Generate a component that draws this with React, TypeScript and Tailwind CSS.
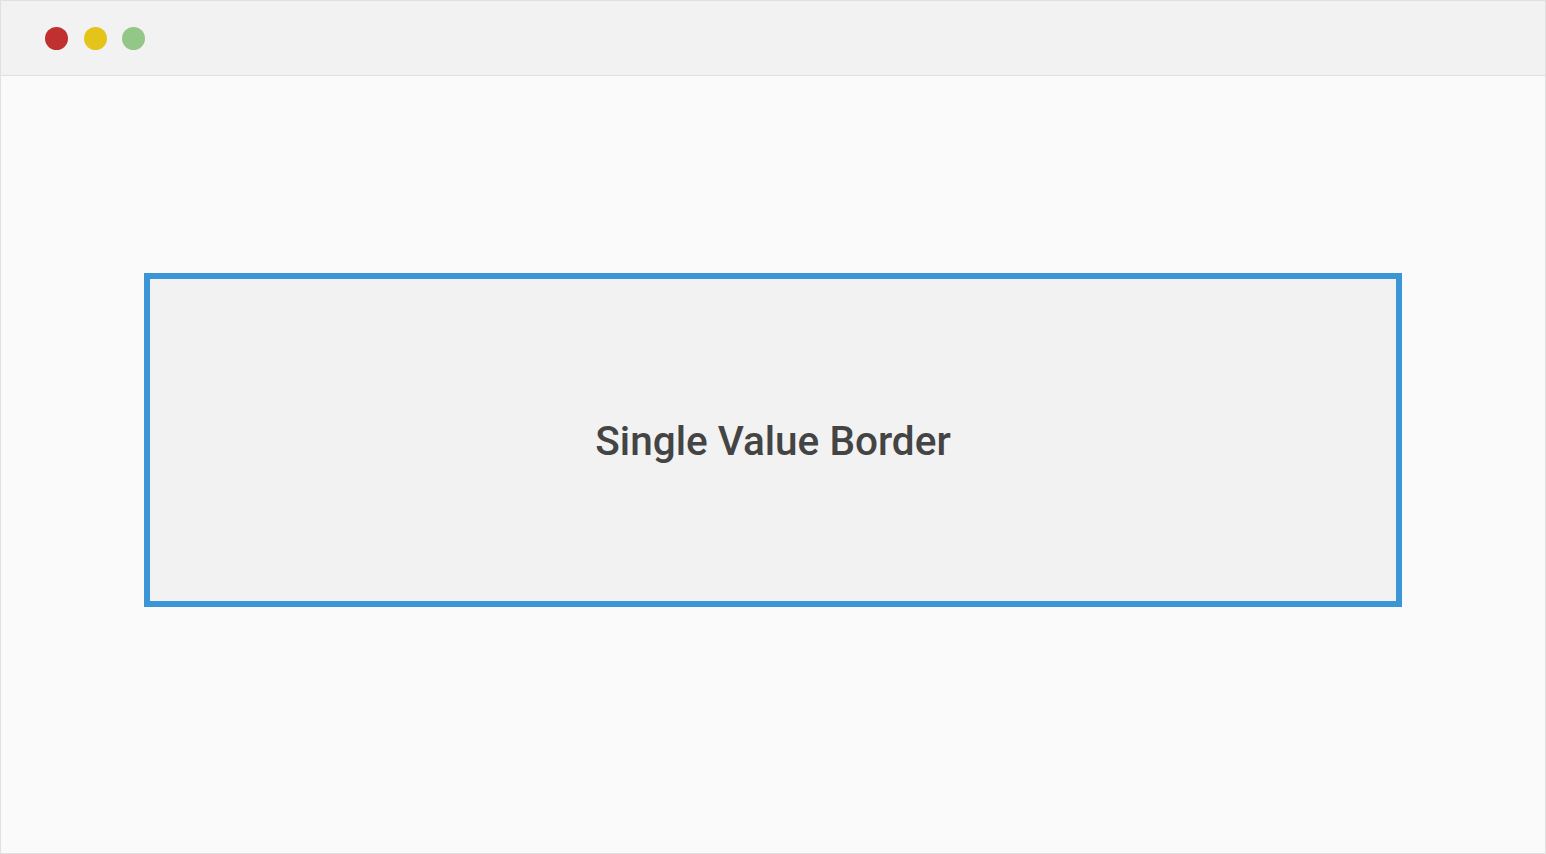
export default function App() {
  return (
    <div className="w-[1546px] h-[854px] border border-[#e0e0e0] flex flex-col bg-[#fafafa]" style={{ fontFamily: "Roboto, 'Noto Sans', sans-serif" }}>
      <div className="h-[75px] shrink-0 bg-[#f2f2f2] border-b border-[#e0e0e0] flex items-center pl-[44px] gap-[15.5px] pt-[1px]">
        <div className="w-[23px] h-[23px] rounded-full bg-[#c0302e]" />
        <div className="w-[23px] h-[23px] rounded-full bg-[#e4c31b]" />
        <div className="w-[23px] h-[23px] rounded-full bg-[#93c787]" />
      </div>
      <div className="flex-1 pt-[197px] px-[143px]">
        <div className="h-[334px] border-[6px] border-[#3a96d6] bg-[#f2f2f2] flex items-center justify-center">
          <span className="text-[40.5px] font-medium text-[#444444] leading-none pt-[2px]">Single Value Border</span>
        </div>
      </div>
    </div>
  );
}
